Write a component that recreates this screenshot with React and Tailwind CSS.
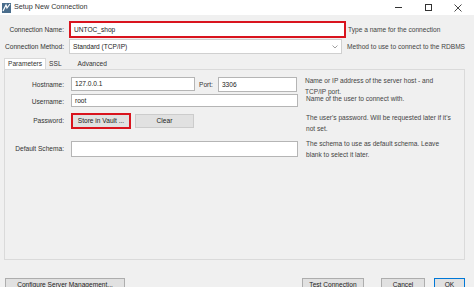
import React from 'react';

const font = { fontFamily: '"Liberation Sans", Arial, sans-serif' };

const Label = ({ children, w = 'w-[64px]', className = '' }) => (
    <div className={`${w} shrink-0 text-right whitespace-nowrap text-[6.6px] text-[#333] ${className}`}>{children}</div>
);

const Help = ({ children, className = '' }) => (
    <div className={`whitespace-nowrap text-[6.6px] leading-[11px] text-[#444] ${className}`}>{children}</div>
);

const Input = ({ value, className = '' }) => (
    <div className={`bg-white border border-[#b5b5b5] flex items-center pl-[3px] text-[6.6px] text-[#222] ${className}`}>{value}</div>
);

const Button = ({ children, className = '' }) => (
    <div className={`bg-[#e1e1e1] border flex items-center justify-center whitespace-nowrap text-[6.6px] text-[#222] ${className}`}>{children}</div>
);

const App = () => {
    return (
        <div className="w-[474px] h-[287px] overflow-hidden flex flex-col bg-[#f0f0f0]" style={font}>
            {/* title bar */}
            <div className="h-[15px] bg-white flex items-center shrink-0">
                <svg width="9" height="10" viewBox="0 0 9 10" className="ml-[2px]">
                    <rect x="0" y="0" width="9" height="10" fill="#4a6d8c" />
                    <path d="M1 8 L4 2 L5 5 L8 1" stroke="#fff" strokeWidth="1.2" fill="none" />
                </svg>
                <div className="ml-[3px] text-[7.2px] text-[#333]">Setup New Connection</div>
                <div className="flex-1" />
                <div className="w-[30px] flex justify-center">
                    <div className="w-[7px] h-px bg-[#333]" />
                </div>
                <div className="w-[30px] flex justify-center">
                    <div className="w-[7px] h-[7px] border border-[#333]" />
                </div>
                <div className="w-[30px] flex justify-center mr-[1px]">
                    <svg width="8" height="8" viewBox="0 0 8 8">
                        <path d="M0.5 0.5 L7.5 7.5 M7.5 0.5 L0.5 7.5" stroke="#333" strokeWidth="0.9" />
                    </svg>
                </div>
            </div>

            {/* connection name */}
            <div className="flex items-center mt-[6px] h-[17px]">
                <Label>Connection Name:</Label>
                <div className="ml-[5px] w-[277px] h-[17px] bg-white border-[2px] border-[#d9141e] flex items-center pl-[3px] text-[6.6px] text-[#222]">
                    UNTOC_shop
                </div>
                <Help className="ml-[2px]">Type a name for the connection</Help>
            </div>

            {/* connection method */}
            <div className="flex items-center mt-[1px] h-[15px]">
                <Label>Connection Method:</Label>
                <div className="ml-[5px] w-[273px] h-[15px] bg-white border border-[#d0d0d0] flex items-center pl-[3px] text-[6.6px] text-[#222]">
                    <span className="flex-1">Standard (TCP/IP)</span>
                    <svg width="6" height="4" viewBox="0 0 6 4" className="mr-[3px]">
                        <path d="M0.5 0.5 L3 3 L5.5 0.5" stroke="#888" strokeWidth="0.8" fill="none" />
                    </svg>
                </div>
                <Help className="ml-[5px]">Method to use to connect to the RDBMS</Help>
            </div>

            {/* tabs */}
            <div className="flex items-end mt-[4px] ml-[4px] h-[11px] text-[6.6px] text-[#333]">
                <div className="h-[11px] px-[3px] bg-white border border-b-0 border-[#d9d9d9] flex items-center">Parameters</div>
                <div className="h-[10px] px-[3px] flex items-center">SSL</div>
                <div className="h-[10px] ml-[10px] px-[3px] flex items-center">Advanced</div>
            </div>

            {/* panel */}
            <div className="ml-[4px] w-[461px] h-[191px] border border-[#dadada] bg-[#f0f0f0] flex flex-col pt-[7px] shrink-0">
                {/* hostname */}
                <div className="flex items-start h-[15px]">
                    <Label w="w-[59px]" className="mt-[3px]">Hostname:</Label>
                    <Input value="127.0.0.1" className="ml-[7px] w-[124px] h-[14px]" />
                    <div className="ml-[4px] mt-[3px] text-[6.6px] text-[#333]">Port:</div>
                    <Input value="3306" className="ml-[5px] w-[79px] h-[15px]" />
                    <Help className="ml-[8px] -mt-[2px]">Name or IP address of the server host - and<br />TCP/IP port.</Help>
                </div>

                {/* username */}
                <div className="flex items-start mt-[2px] h-[13px]">
                    <Label w="w-[59px]" className="mt-[3px]">Username:</Label>
                    <Input value="root" className="ml-[7px] w-[227px] h-[13px]" />
                    <Help className="ml-[8px] -mt-[1px]">Name of the user to connect with.</Help>
                </div>

                {/* password */}
                <div className="flex items-start mt-[6px] h-[16px]">
                    <Label w="w-[59px]" className="mt-[3px]">Password:</Label>
                    <Button className="ml-[7px] w-[60px] h-[16px] border-[2px] border-[#d9141e]">Store in Vault ...</Button>
                    <Button className="ml-[4px] mt-[1px] w-[59px] h-[14px] border-[#cccccc]">Clear</Button>
                    <Help className="ml-[112px] -mt-[1px]">The user's password. Will be requested later if it's<br />not set.</Help>
                </div>

                {/* default schema */}
                <div className="flex items-start mt-[12px] h-[16px]">
                    <Label w="w-[59px]" className="mt-[3px]">Default Schema:</Label>
                    <Input value="" className="ml-[7px] w-[227px] h-[16px]" />
                    <Help className="ml-[8px] -mt-[3px]">The schema to use as default schema. Leave<br />blank to select it later.</Help>
                </div>
            </div>

            {/* footer buttons */}
            <div className="flex items-start mt-[18px] h-[14px]">
                <Button className="ml-[5px] w-[120px] h-[14px] border-[#adadad]">Configure Server Management...</Button>
                <div className="flex-1" />
                <Button className="w-[62px] h-[14px] border-[#adadad]">Test Connection</Button>
                <Button className="ml-[17px] w-[44px] h-[14px] border-[#adadad]">Cancel</Button>
                <Button className="ml-[9px] mr-[9px] w-[31px] h-[14px] border-[#0078d7]">OK</Button>
            </div>
        </div>
    );
};

export default App;
